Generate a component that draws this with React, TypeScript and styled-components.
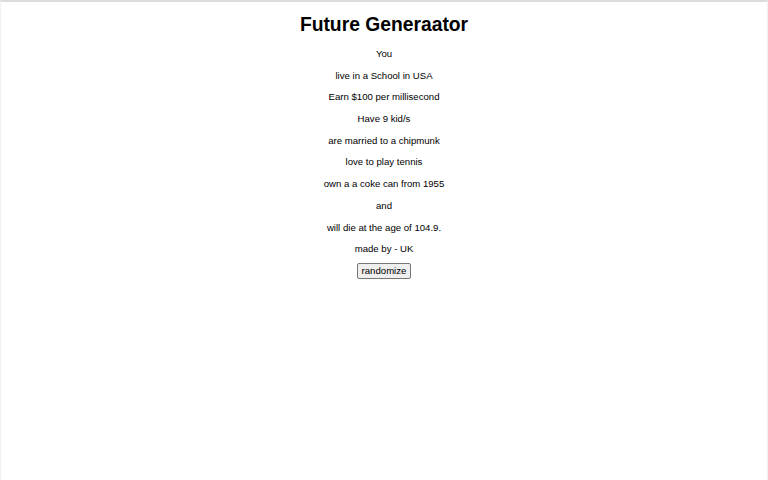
import React, { useState } from "react";
import styled, { createGlobalStyle } from "styled-components";

const GlobalStyle = createGlobalStyle`
  html, body {
    margin: 0;
    padding: 0;
    background: #ffffff;
  }
  body {
    font-family: "Liberation Sans", Arial, sans-serif;
    font-size: 9.6px;
    color: #000000;
  }
`;

const places = ["School", "Hospital", "Castle", "Cave", "Treehouse"];
const countries = ["USA", "UK", "Japan", "Brazil", "Canada"];
const partners = ["a chipmunk", "a robot", "a pirate", "a llama"];
const hobbies = ["play tennis", "knit socks", "eat pizza", "dance"];
const things = ["a coke can from 1955", "a golden toaster", "a pet rock"];

const pick = <T,>(list: T[]) => list[Math.floor(Math.random() * list.length)];

const Page = styled.div`
  min-height: 100vh;
  box-sizing: border-box;
  border-top: 2px solid #dcdcdc;
  border-left: 1px solid #f2f2f2;
  border-right: 1px solid #f2f2f2;
  text-align: center;
  padding-top: 2px;
`;

const Title = styled.h1`
  font-size: 19.3px;
  font-weight: bold;
  margin: 10px 0 12px;
`;

const Line = styled.p`
  margin: 10.7px 0;
  font-size: 9.6px;
`;

const RandomButton = styled.button`
  font-family: "Liberation Sans", Arial, sans-serif;
  font-size: 9.6px;
  color: #000000;
  background: #efefef;
  border: 1px solid #767676;
  border-radius: 2px;
  padding: 1px 4px 2px;
  margin-top: -3px;
  cursor: pointer;
`;

const App = () => {
  const [future, setFuture] = useState({
    place: "School",
    country: "USA",
    pay: 100,
    kids: 9,
    partner: "a chipmunk",
    hobby: "play tennis",
    thing: "a coke can from 1955",
    age: 104.9,
  });

  const randomize = () => {
    setFuture({
      place: pick(places),
      country: pick(countries),
      pay: Math.floor(Math.random() * 1000),
      kids: Math.floor(Math.random() * 12),
      partner: pick(partners),
      hobby: pick(hobbies),
      thing: pick(things),
      age: Math.round(Math.random() * 1200) / 10,
    });
  };

  return (
    <>
      <GlobalStyle />
      <Page>
        <Title>Future Generaator</Title>
        <Line>You</Line>
        <Line>live in a {future.place} in {future.country}</Line>
        <Line>Earn ${future.pay} per millisecond</Line>
        <Line>Have {future.kids} kid/s</Line>
        <Line>are married to {future.partner}</Line>
        <Line>love to {future.hobby}</Line>
        <Line>own a {future.thing}</Line>
        <Line>and</Line>
        <Line>will die at the age of {future.age}.</Line>
        <Line>made by - UK</Line>
        <RandomButton onClick={randomize}>randomize</RandomButton>
      </Page>
    </>
  );
};

export default App;
